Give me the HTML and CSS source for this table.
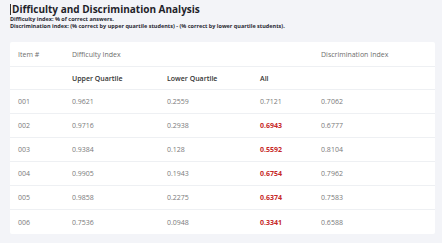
FILE: index.html
```html
<!DOCTYPE html>
<html>
<head>
<meta charset="utf-8">
<link rel="stylesheet" href="styles.css">
</head>
<body>
<div class="page">
  <h1 class="title"><span class="caret"></span>Difficulty and Discrimination Analysis</h1>
  <p class="note">Difficulty index: % of correct answers.</p>
  <p class="note">Discrimination index: (% correct by upper quartile students) - (% correct by lower quartile students).</p>
  <div class="card">
    <table class="grid">
      <colgroup>
        <col class="c1"><col class="c2"><col class="c3"><col class="c4"><col class="c5">
      </colgroup>
      <thead>
        <tr class="h1row"><th>Item #</th><th colspan="3">Difficulty Index</th><th>Discrimination Index</th></tr>
        <tr class="h2row"><th></th><th>Upper Quartile</th><th>Lower Quartile</th><th>All</th><th></th></tr>
      </thead>
      <tbody>
        <tr><td>001</td><td>0.9621</td><td>0.2559</td><td>0.7121</td><td>0.7062</td></tr>
        <tr><td>002</td><td>0.9716</td><td>0.2938</td><td class="bad">0.6943</td><td>0.6777</td></tr>
        <tr><td>003</td><td>0.9384</td><td>0.128</td><td class="bad">0.5592</td><td>0.8104</td></tr>
        <tr><td>004</td><td>0.9905</td><td>0.1943</td><td class="bad">0.6754</td><td>0.7962</td></tr>
        <tr><td>005</td><td>0.9858</td><td>0.2275</td><td class="bad">0.6374</td><td>0.7583</td></tr>
        <tr><td>006</td><td>0.7536</td><td>0.0948</td><td class="bad">0.3341</td><td>0.6588</td></tr>
      </tbody>
    </table>
  </div>
</div>
</body>
</html>
```
FILE: styles.css
```css
html, body {
  margin: 0;
  padding: 0;
  background: #f3f4f8;
}
.page {
  padding: 3px 7px 0 10px;
  font-family: "Open Sans", sans-serif;
  color: #222;
}
.title {
  margin: 0;
  font-size: 10px;
  line-height: 13px;
  font-weight: bold;
  color: #1f1f2a;
  display: flex;
  align-items: center;
}
.caret {
  display: inline-block;
  width: 1px;
  height: 11px;
  background: #333;
  margin-right: 1px;
}
.note {
  margin: 0;
  font-size: 5.5px;
  line-height: 7px;
  font-weight: bold;
  color: #2a2a33;
}
.card {
  margin-top: 12px;
  background: #fff;
  width: 425px;
  border-radius: 2px;
}
.grid {
  width: 100%;
  border-collapse: collapse;
  table-layout: fixed;
}
.c1 { width: 62px; }
.c2 { width: 95px; }
.c3 { width: 93px; }
.c4 { width: 61px; }
.grid th, .grid td {
  text-align: left;
  padding: 0 0 0 8px;
  font-size: 7px;
  white-space: nowrap;
  border-bottom: 1px solid #eef0f3;
}
.grid th:not(:first-child), .grid td:not(:first-child) { padding-left: 0; }
.h1row th {
  height: 24px;
  font-weight: normal;
  color: #6e6e6e;
}
.h2row th {
  height: 22px;
  font-weight: 600;
  color: #333;
}
.grid td {
  height: 23px;
  color: #7a7a7a;
  font-weight: normal;
}
.grid tbody tr:last-child td { border-bottom: none; height: 24px; }
.grid td.bad {
  color: #c62828;
  font-weight: bold;
}
```
